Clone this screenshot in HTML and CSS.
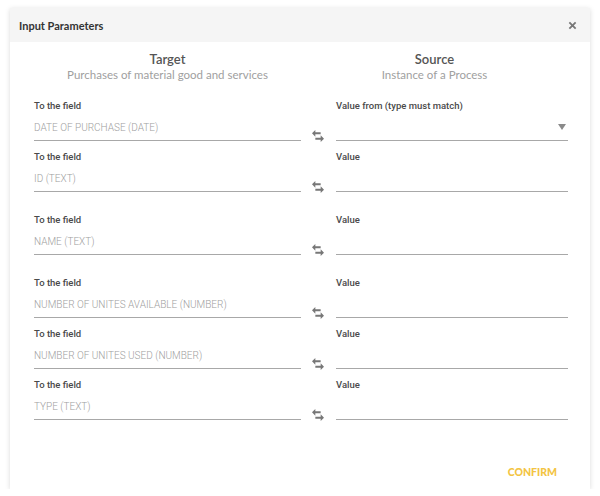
FILE: index.html
```html
<!DOCTYPE html>
<html lang="en">
<head>
  <meta charset="UTF-8" />
  <meta name="viewport" content="width=device-width, initial-scale=1.0" />
  <title>Input Parameters</title>
  <link rel="stylesheet" href="styles.css">
</head>
<body>
  <div class="dialog">
    <!-- Kopfzeile -->
    <div class="dialog-header">
      <span class="dialog-title">Input Parameters</span>
      <svg class="close" viewBox="0 0 10 10" width="9" height="9">
        <path d="M1.5 1.5L8.5 8.5M8.5 1.5L1.5 8.5" />
      </svg>
    </div>

    <div class="dialog-body">
      <div class="headings">
        <div class="heading">
          <div class="heading-title">Target</div>
          <div class="heading-sub">Purchases of material good and services</div>
        </div>
        <div class="heading">
          <div class="heading-title">Source</div>
          <div class="heading-sub">Instance of a Process</div>
        </div>
      </div>

      <div class="row">
        <div class="field">
          <div class="field-label">To the field</div>
          <div class="field-input">DATE OF PURCHASE (DATE)</div>
        </div>
        <svg class="swap" viewBox="0 0 24 24"><path d="M8 3L3 8l5 5V9.5h8v-3H8V3z M16 11v3.5H8v3h8V21l5-5-5-5z" /></svg>
        <div class="field">
          <div class="field-label">Value from (type must match)</div>
          <div class="field-input select"><span class="caret"></span></div>
        </div>
      </div>

      <div class="row spaced">
        <div class="field">
          <div class="field-label">To the field</div>
          <div class="field-input">ID (TEXT)</div>
        </div>
        <svg class="swap" viewBox="0 0 24 24"><path d="M8 3L3 8l5 5V9.5h8v-3H8V3z M16 11v3.5H8v3h8V21l5-5-5-5z" /></svg>
        <div class="field">
          <div class="field-label">Value</div>
          <div class="field-input"></div>
        </div>
      </div>

      <div class="row spaced">
        <div class="field">
          <div class="field-label">To the field</div>
          <div class="field-input">NAME (TEXT)</div>
        </div>
        <svg class="swap" viewBox="0 0 24 24"><path d="M8 3L3 8l5 5V9.5h8v-3H8V3z M16 11v3.5H8v3h8V21l5-5-5-5z" /></svg>
        <div class="field">
          <div class="field-label">Value</div>
          <div class="field-input"></div>
        </div>
      </div>

      <div class="row">
        <div class="field">
          <div class="field-label">To the field</div>
          <div class="field-input">NUMBER OF UNITES AVAILABLE (NUMBER)</div>
        </div>
        <svg class="swap" viewBox="0 0 24 24"><path d="M8 3L3 8l5 5V9.5h8v-3H8V3z M16 11v3.5H8v3h8V21l5-5-5-5z" /></svg>
        <div class="field">
          <div class="field-label">Value</div>
          <div class="field-input"></div>
        </div>
      </div>

      <div class="row">
        <div class="field">
          <div class="field-label">To the field</div>
          <div class="field-input">NUMBER OF UNITES USED (NUMBER)</div>
        </div>
        <svg class="swap" viewBox="0 0 24 24"><path d="M8 3L3 8l5 5V9.5h8v-3H8V3z M16 11v3.5H8v3h8V21l5-5-5-5z" /></svg>
        <div class="field">
          <div class="field-label">Value</div>
          <div class="field-input"></div>
        </div>
      </div>

      <div class="row">
        <div class="field">
          <div class="field-label">To the field</div>
          <div class="field-input">TYPE (TEXT)</div>
        </div>
        <svg class="swap" viewBox="0 0 24 24"><path d="M8 3L3 8l5 5V9.5h8v-3H8V3z M16 11v3.5H8v3h8V21l5-5-5-5z" /></svg>
        <div class="field">
          <div class="field-label">Value</div>
          <div class="field-input"></div>
        </div>
      </div>
    </div>

    <div class="dialog-footer">
      <span class="confirm">CONFIRM</span>
    </div>
  </div>
</body>
</html>
```

FILE: styles.css
```css
body {
  margin: 0;
  background-color: #ffffff;
  font-family: Lato, "Open Sans", sans-serif;
  color: #444444;
}
.dialog {
  display: flex;
  flex-direction: column;
  width: 580px;
  height: 481px;
  margin: 8px 0 0 10px;
  background-color: #ffffff;
  box-shadow: 0 1px 5px rgba(0, 0, 0, 0.15);
}
.dialog-header {
  display: flex;
  justify-content: space-between;
  align-items: center;
  height: 34px;
  padding: 0 13px 0 9px;
  background-color: #f5f5f5;
}
.dialog-title {
  font-size: 11px;
  font-weight: bold;
  color: #333333;
}
.close {
  fill: none;
  stroke: #777777;
  stroke-width: 2;
}
.dialog-body {
  padding: 9px 22px 0 24px;
}
.headings {
  display: grid;
  grid-template-columns: 1fr 1fr;
  margin-bottom: 16px;
}
.heading {
  text-align: center;
}
.heading-title {
  font-size: 13px;
  line-height: 16px;
  font-weight: 600;
  color: #555555;
}
.heading-sub {
  font-size: 11.5px;
  line-height: 16px;
  font-weight: 400;
  color: #a0a0a0;
}
.row {
  display: grid;
  grid-template-columns: 267px 35px 1fr;
  margin-bottom: 9px;
}
.row.spaced {
  margin-bottom: 21px;
}
.field-label {
  font-family: Roboto, sans-serif;
  font-size: 9.5px;
  line-height: 14px;
  font-weight: 500;
  color: #4a4a4a;
}
.field-input {
  position: relative;
  height: 14px;
  padding: 8px 0 5px;
  border-bottom: 1px solid #a8a8a8;
  font-family: Roboto, sans-serif;
  font-size: 10px;
  line-height: 14px;
  font-weight: 300;
  color: #a0a0a0;
}
.caret {
  position: absolute;
  right: 2px;
  top: 11px;
  border-left: 4.5px solid transparent;
  border-right: 4.5px solid transparent;
  border-top: 6px solid #8a8a8a;
}
.swap {
  align-self: end;
  justify-self: center;
  width: 16px;
  height: 16px;
  margin: 0 0 -3px -2px;
  fill: #777777;
}
.dialog-footer {
  display: flex;
  justify-content: flex-end;
  margin-top: auto;
  padding: 0 33px 10px;
}
.confirm {
  font-size: 10.5px;
  line-height: 14px;
  font-weight: 900;
  color: #f3c443;
}
```
